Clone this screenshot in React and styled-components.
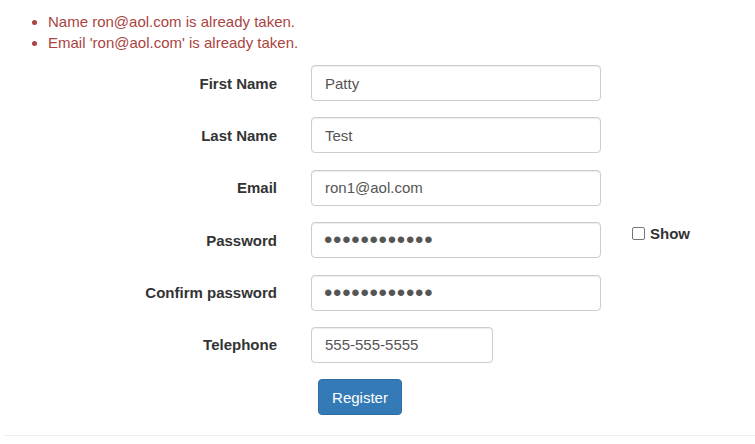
import React from "react";
import styled, { createGlobalStyle } from "styled-components";

const GlobalStyle = createGlobalStyle`
  html, body {
    margin: 0;
    padding: 0;
    background: #fff;
  }
  body {
    font-family: "Liberation Sans", Arial, Helvetica, sans-serif;
    font-size: 15px;
    line-height: 21px;
    color: #333;
  }
  * { box-sizing: border-box; }
`;

const Page = styled.div`
  padding-top: 11px;
`;

const ErrorList = styled.ul`
  margin: 0;
  padding-left: 48px;
  color: #a94442;
  line-height: 21px;
`;

const Form = styled.form`
  margin-top: 12px;
`;

const FormGroup = styled.div`
  display: flex;
  align-items: center;
  height: 36px;
  margin-bottom: 16.4px;
`;

const Label = styled.label`
  width: 277px;
  flex: none;
  text-align: right;
  font-weight: bold;
  margin-right: 34px;
`;

const Input = styled.input`
  width: ${(p) => p.$width}px;
  height: 36px;
  padding: 0 13px;
  border: 1px solid #ccc;
  border-radius: 4px;
  box-shadow: inset 0 1px 1px rgba(0, 0, 0, 0.075);
  font-family: "Liberation Sans", Arial, sans-serif;
  font-size: 15px;
  color: #555;
  background: #fff;
  outline: none;
`;

const PasswordInput = styled(Input)`
  font-size: 24px;
  letter-spacing: 0.7px;
  padding: 0 12px;
`;

const ShowToggle = styled.label`
  align-self: flex-start;
  margin-left: 31px;
  padding-top: 1px;
  display: flex;
  align-items: center;
  gap: 5px;
  font-weight: bold;
`;

const CheckBox = styled.input`
  appearance: none;
  margin: 0;
  width: 13px;
  height: 13px;
  border: 1px solid #767676;
  border-radius: 2px;
  background: #fff;
`;

const ButtonRow = styled.div`
  padding-left: 318px;
`;

const Button = styled.button`
  height: 36px;
  width: 84px;
  padding: 0;
  border: 1px solid #2e6da4;
  border-radius: 4px;
  background: #337ab7;
  color: #fff;
  font-family: "Liberation Sans", Arial, sans-serif;
  font-size: 15px;
`;

const Rule = styled.hr`
  margin: 20px 0 0 5px;
  border: 0;
  border-top: 1px solid #eee;
`;

const fields = [
  { label: "First Name", value: "Patty", type: "text", width: 290 },
  { label: "Last Name", value: "Test", type: "text", width: 290 },
  { label: "Email", value: "ron1@aol.com", type: "text", width: 290 },
  { label: "Password", value: "abcdefghijkl", type: "password", width: 290, show: true },
  { label: "Confirm password", value: "abcdefghijkl", type: "password", width: 290 },
  { label: "Telephone", value: "555-555-5555", type: "text", width: 182 },
];

export default function App() {
  return (
    <Page>
      <GlobalStyle />
      <ErrorList>
        <li>Name ron@aol.com is already taken.</li>
        <li>Email 'ron@aol.com' is already taken.</li>
      </ErrorList>
      <Form onSubmit={(e) => e.preventDefault()}>
        {fields.map((f) => {
          const Field = f.type === "password" ? PasswordInput : Input;
          return (
            <FormGroup key={f.label}>
              <Label>{f.label}</Label>
              <Field type={f.type} defaultValue={f.value} $width={f.width} readOnly />
              {f.show && (
                <ShowToggle>
                  <CheckBox type="checkbox" />
                  Show
                </ShowToggle>
              )}
            </FormGroup>
          );
        })}
        <ButtonRow>
          <Button type="submit">Register</Button>
        </ButtonRow>
      </Form>
      <Rule />
    </Page>
  );
}
